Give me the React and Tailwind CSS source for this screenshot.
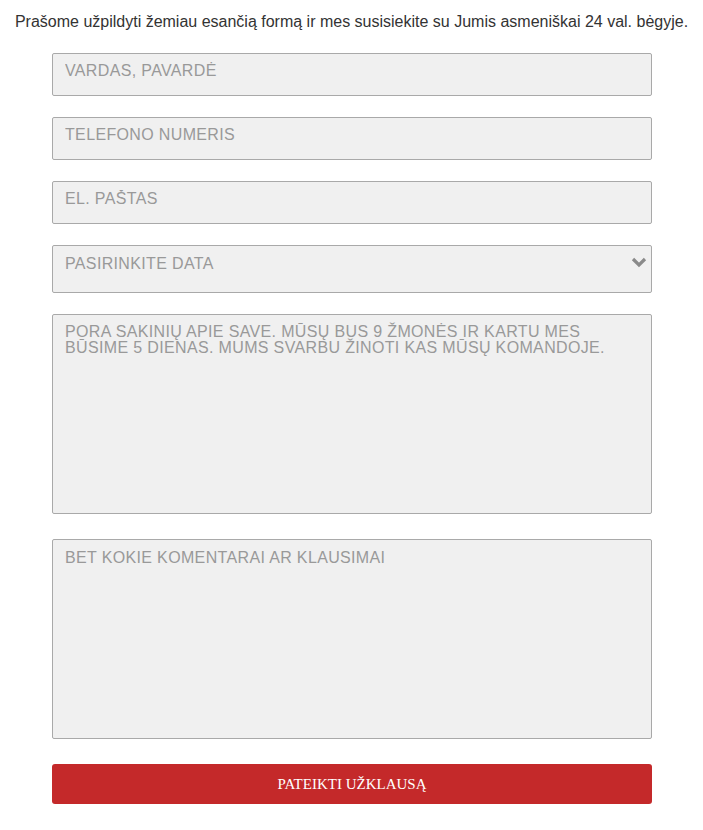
import React from "react";

const field =
  "block w-full rounded-[2px] border border-[#a9a9a9] bg-[#f0f0f0] px-[12px] text-[16px] leading-[16px] tracking-[0.35px] uppercase text-[#555] placeholder:text-[#999] outline-none";

export default function App() {
  return (
    <div className="min-h-[830px] bg-white" style={{ fontFamily: '"Liberation Sans", Arial, sans-serif' }}>
      <p className="pt-[12px] text-center text-[16px] leading-[20px] text-[#333]">
        Prašome užpildyti žemiau esančią formą ir mes susisiekite su Jumis asmeniškai 24 val. bėgyje.
      </p>
      <div className="mx-[52px] mt-[21px] flex w-[600px] flex-col">
        <input className={`${field} h-[43px] pt-[9px] pb-[16px]`} placeholder="VARDAS, PAVARDĖ" />
        <input className={`${field} mt-[21px] h-[43px] pt-[9px] pb-[16px]`} placeholder="TELEFONO NUMERIS" />
        <input className={`${field} mt-[21px] h-[43px] pt-[9px] pb-[16px]`} placeholder="EL. PAŠTAS" />
        <div className="relative mt-[21px]">
          <select
            className={`${field} h-[48px] appearance-none pt-[10px] pb-[20px] text-[#999]`}
            defaultValue=""
          >
            <option value="">PASIRINKITE DATA</option>
          </select>
          <svg
            className="pointer-events-none absolute right-[5px] top-[11px]"
            width="16"
            height="12"
            viewBox="0 0 16 12"
          >
            <path d="M2 3 L8 9 L14 3" fill="none" stroke="#8a8a8a" strokeWidth="3.2" strokeLinejoin="miter" />
          </svg>
        </div>
        <textarea
          className={`${field} mt-[21px] h-[200px] resize-none pt-[9px] pb-[8px]`}
          placeholder="PORA SAKINIŲ APIE SAVE. MŪSŲ BUS 9 ŽMONĖS IR KARTU MES BŪSIME 5 DIENAS. MUMS SVARBU ŽINOTI KAS MŪSŲ KOMANDOJE."
        />
        <textarea
          className={`${field} mt-[25px] h-[200px] resize-none pt-[10px] pb-[8px]`}
          placeholder="BET KOKIE KOMENTARAI AR KLAUSIMAI"
        />
        <button
          className="mt-[25px] h-[40px] w-full rounded-[3px] bg-[#c4292a] text-[15px] text-white"
          style={{ fontFamily: '"Liberation Serif", "Times New Roman", serif' }}
        >
          PATEIKTI UŽKLAUSĄ
        </button>
      </div>
    </div>
  );
}
